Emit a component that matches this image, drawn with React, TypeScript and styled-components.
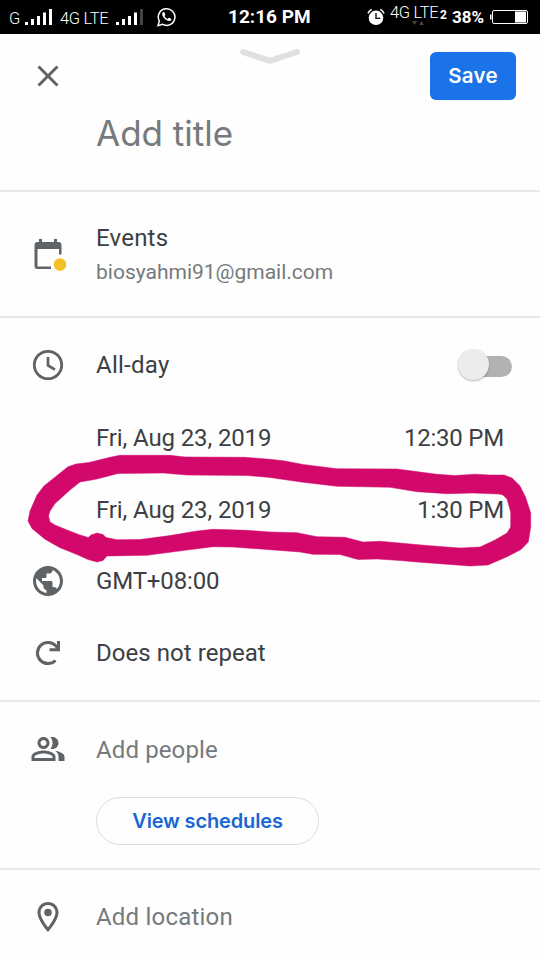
import React from 'react';
import styled, { createGlobalStyle } from 'styled-components';

const GlobalStyle = createGlobalStyle`
  * { box-sizing: border-box; }
  body { margin: 0; background: #fefefe; }
  button { font: inherit; padding: 0; border: 0; background: none; }
  svg { display: block; flex: none; }
`;

const Screen = styled.main`
  position: relative;
  width: 540px;
  height: 960px;
  overflow: hidden;
  background: #fefefe;
  color: #3c4043;
  font-family: Roboto, 'Liberation Sans', sans-serif;
`;

const StatusBar = styled.header`
  height: 34px;
  padding: 0 11px 0 9px;
  display: grid;
  grid-template-columns: 219px 1fr auto;
  align-items: center;
  background: #000;
  color: #fff;
`;

const StatusGroup = styled.div`
  display: flex;
  align-items: center;
  height: 34px;
`;

const Network = styled.span<{ $width: number; $top?: number }>`
  font-size: 16.5px;
  line-height: 20px;
  width: ${(p) => p.$width}px;
  margin-top: ${(p) => p.$top ?? 0}px;
  white-space: nowrap;
  letter-spacing: -0.3px;
  font-weight: 300;
`;

const IconGap = styled.span<{ $width: number }>`
  width: ${(p) => p.$width}px;
`;

const Clock = styled.time`
  font-weight: 700;
  font-size: 19px;
  line-height: 34px;
  white-space: nowrap;
`;

const Battery = styled.span`
  width: 37px;
  font-weight: 700;
  font-size: 17px;
  line-height: 34px;
`;

const NetworkStack = styled.div`
  display: flex;
  flex-direction: column;
  align-items: flex-start;
  width: 62px;
  height: 34px;
  padding-top: 3px;
`;

const NetworkLine = styled.div`
  display: flex;
  align-items: flex-start;
  height: 18px;
`;

const SimIndex = styled.b`
  font-size: 12px;
  line-height: 24px;
`;

const TitleSection = styled.section`
  height: 158px;
  border-bottom: 2px solid #e8e8e8;
`;

const ActionRow = styled.div`
  height: 66px;
  display: grid;
  grid-template-columns: 96px 1fr 110px;
`;

const IconCell = styled.div`
  display: flex;
  align-items: center;
  justify-content: center;
`;

const CloseButton = styled.button`
  display: flex;
  align-items: center;
  justify-content: center;
  padding-top: 18px;
`;

const DragHandle = styled.div`
  padding: 14px 0 0 143px;
`;

const SaveButton = styled.button`
  width: 86px;
  height: 48px;
  margin-top: 18px;
  border-radius: 6px;
  background: #1a73e8;
  color: #fff;
  font-family: Inter, sans-serif;
  font-weight: 600;
  font-size: 20.5px;
  line-height: 48px;
  letter-spacing: 0.3px;
`;

const TitleField = styled.div`
  padding-left: 96px;
  height: 68px;
  line-height: 66px;
  color: #757a7d;
  font-family: Inter, sans-serif;
  font-size: 35px;
  letter-spacing: 0;
`;

const Section = styled.section<{ $height: number }>`
  height: ${(p) => p.$height}px;
  padding: 11px 0;
  border-bottom: 2px solid #e7e8ea;
`;

const CalendarSection = styled.section`
  height: 126px;
  display: grid;
  grid-template-columns: 96px 1fr;
  border-bottom: 2px solid #e5e7ea;
`;

const Account = styled.div`
  padding-top: 29px;
`;

const AccountName = styled.div`
  font-size: 24px;
  line-height: 34px;
  letter-spacing: 0.2px;
`;

const Email = styled.div`
  font-size: 21px;
  line-height: 34px;
  color: #757a7d;
`;

const Row = styled.div<{ $drop?: boolean }>`
  height: 72px;
  padding: ${(p) => (p.$drop ? 2 : 0)}px 36px 0 0;
  display: grid;
  grid-template-columns: 96px 1fr auto;
  align-items: center;
`;

const Label = styled.span<{ $muted?: boolean; $spacing?: number; $drop?: boolean }>`
  font-size: 24px;
  line-height: 36px;
  padding-top: ${(p) => (p.$drop ? 2 : 0)}px;
  letter-spacing: ${(p) => p.$spacing ?? 0}px;
  color: ${(p) => (p.$muted ? '#757a7d' : '#3c4043')};
  white-space: nowrap;
`;

const Switch = styled.button`
  width: 54px;
  height: 35px;
  margin-right: -8px;
  padding: 8px 0 0 12px;
  display: grid;
`;

const SwitchTrack = styled.span`
  width: 42px;
  height: 21px;
  border-radius: 11px;
  background: #b2b2b2;
`;

const SwitchThumb = styled.span`
  position: relative;
  display: block;
  top: -7px;
  left: -12px;
  width: 31px;
  height: 31px;
  border-radius: 50%;
  background: #ececec;
  box-shadow: 0 1px 2px rgba(0, 0, 0, 0.3);
`;

const ScheduleButton = styled.button`
  display: block;
  width: 223px;
  height: 48px;
  margin: 12px 0 0 96px;
  border: 1px solid #dadce0;
  border-radius: 24px;
  color: #1967d2;
  font-family: Inter, sans-serif;
  font-weight: 600;
  font-size: 20px;
  line-height: 46px;
  letter-spacing: -0.15px;
`;

const MarkerOverlay = styled.svg`
  position: absolute;
  left: 0;
  top: 0;
  pointer-events: none;
`;

const GRAY = '#5f6366';

const Icon = ({ d }: { d: string }) => (
  <svg width="36" height="36" viewBox="0 0 24 24" fill={GRAY}>
    <path d={d} />
  </svg>
);

const ICONS = {
  close: 'M19 6.41 17.59 5 12 10.59 6.41 5 5 6.41 10.59 12 5 17.59 6.41 19 12 13.41 17.59 19 19 17.59 13.41 12z',
  globe:
    'M12 2C6.48 2 2 6.48 2 12s4.48 10 10 10 10-4.48 10-10S17.52 2 12 2zm-1 17.93c-3.95-.49-7-3.85-7-7.93 0-.62.08-1.21.21-1.79L9 15v1c0 1.1.9 2 2 2v1.93zm6.9-2.54c-.26-.81-1-1.39-1.9-1.39h-1v-3c0-.55-.45-1-1-1H8v-2h2c.55 0 1-.45 1-1V7h2c1.1 0 2-.9 2-2v-.41c2.93 1.19 5 4.06 5 7.41 0 2.08-.8 3.97-2.1 5.39z',
  people:
    'M16.67 13.13C18.04 14.06 19 15.32 19 17v3h4v-3c0-2.18-3.57-3.47-6.33-3.87zM15 12c2.21 0 4-1.79 4-4s-1.79-4-4-4c-.47 0-.91.1-1.33.24C14.5 5.27 15 6.58 15 8s-.5 2.73-1.33 3.76c.42.14.86.24 1.33.24zM9 12c2.21 0 4-1.79 4-4s-1.79-4-4-4-4 1.79-4 4 1.79 4 4 4zm0-6c1.1 0 2 .9 2 2s-.9 2-2 2-2-.9-2-2 .9-2 2-2zM9 13c-2.67 0-8 1.34-8 4v3h16v-3c0-2.66-5.33-4-8-4zm6 5H3v-.99C3.2 16.29 6.3 15 9 15s5.8 1.29 6 2v1z',
  place:
    'M12 2C8.13 2 5 5.13 5 9c0 5.25 7 13 7 13s7-7.75 7-13c0-3.87-3.13-7-7-7zM7 9c0-2.76 2.24-5 5-5s5 2.24 5 5c0 2.88-2.88 7.19-5 9.88C9.92 16.21 7 11.85 7 9zm5-2.5a2.5 2.5 0 1 0 0 5 2.5 2.5 0 0 0 0-5z',
};

const SignalBars = ({ weakLast }: { weakLast?: boolean }) => (
  <svg width="28" height="18" viewBox="0 0 28 18" fill="#fff">
    <path d="M0 14h3v3H0zM6 11h3v6H6zM12 8h3v9h-3zM18 4.500h3V17h-3z" />
    <path d="M24 1h3v16h-3z" fill={weakLast ? '#444' : '#fff'} />
  </svg>
);

const WhatsAppIcon = () => (
  <svg width="19" height="20" viewBox="0 0 19 20">
    <path d="M1 18.600 2.300 14A8.300 8.300 0 1 1 5.400 17.200z" fill="none" stroke="#fff" strokeWidth="1.500" />
    <path
      d="M6.700 5c-.7 0-1.500.8-1.500 2 0 3 4.200 7 7 7 1.200 0 2.200-1 2.200-1.800 0-.5-2-1.500-2.500-1.500s-.9 1.200-1.400 1.200c-.7 0-3-2.100-3-2.800 0-.4.9-.8.9-1.300S7.500 5 6.700 5z"
      fill="#fff"
    />
  </svg>
);

const AlarmIcon = () => (
  <svg width="18" height="18" viewBox="0 0 18 18">
    <circle cx="9" cy="9.800" r="7.300" fill="#fff" />
    <path d="M.9 5.300A9 9 0 0 1 4.800 1.300M13.200 1.300A9 9 0 0 1 17.100 5.300" stroke="#fff" strokeWidth="1.500" fill="none" />
    <path d="M9 5v5.300h4.300" stroke="#000" strokeWidth="1.300" fill="none" />
  </svg>
);

const BatteryIcon = () => (
  <svg width="40" height="16" viewBox="0 0 40 16">
    <path d="M1 5.500h1.500v5H1z" fill="#fff" />
    <rect x="3.500" y="1.500" width="35" height="13" rx="1.500" fill="none" stroke="#fff" />
    <path d="M26 2.500h11v11H26z" fill="#fff" />
  </svg>
);

const MARKER_PATH = `
M28 521 L30 511 37 495 44 486 68 466.700 76 464 89 462.500 110 457.300 120 455.300 170 455.300 185 457
245 457.300 270 459.300 285 461 303 464.500 337 468.700 397 469 437 474.300 455 475.500 475 474.200 490 475
504 475 512 478 520 486 525.500 497 530.700 513 530.700 527 528.300 542 521 549.500 507 556.700 488 565
470 566 453 564.700 420 562.300 400 560.500 377 559 358 559.500 340 554.500 313 554.300 300 552 270 549.700
233 547 213 546.700 185 550.300 147 555.300 113 555.900 107 556 103 560.500 97 562 88 559.500 77 554.500
60 547.700 45 539.300 32 528.500Z
M48.500 516 L50 522 55 525 67 530 80 535 88.300 537.500 91 535 97 533 103 534.500 106 537.500 117 539.700
140 539.500 170 535.600 197 531 213 529.300 247 530.300 270 532 297 532.700 317 536.700 345 537.300 363 542
380 541.300 427 545.500 460 548 480 547 495 540 507 533 510.700 527 510.700 512 507 499 503 495 499 494
473 493 447 493.700 417 491.700 390 487.300 337 486.300 303 482.300 270 477.500 247 475.500 187 475 163 473
118 473.500 97 479 80 482 70 490 55 503.500 50 511Z`;

export default function App() {
  return (
    <Screen>
      <GlobalStyle />
      <StatusBar>
        <StatusGroup>
          <Network $width={16} $top={4}>G</Network>
          <SignalBars />
          <IconGap $width={7} />
          <Network $width={56} $top={4}>4G LTE</Network>
          <SignalBars weakLast />
          <IconGap $width={13} />
          <WhatsAppIcon />
        </StatusGroup>
        <Clock>12:16 PM</Clock>
        <StatusGroup>
          <AlarmIcon />
          <IconGap $width={5} />
          <NetworkStack>
            <NetworkLine>
              <Network $width={50}>4G LTE</Network>
              <SimIndex>2</SimIndex>
            </NetworkLine>
            <svg width="40" height="5" viewBox="0 0 40 5" fill="#444">
              <path d="M22 0h5l-2.500 4zM29 4h5l-2.500-4z" />
            </svg>
          </NetworkStack>
          <Battery>38%</Battery>
          <BatteryIcon />
        </StatusGroup>
      </StatusBar>

      <TitleSection>
        <ActionRow>
          <CloseButton aria-label="Close">
            <Icon d={ICONS.close} />
          </CloseButton>
          <DragHandle>
            <svg width="62" height="18" viewBox="0 0 62 18">
              <path d="M4 4 31 12.800 58 4" fill="none" stroke="#e0e0e0" strokeWidth="6" strokeLinecap="round" />
            </svg>
          </DragHandle>
          <SaveButton>Save</SaveButton>
        </ActionRow>
        <TitleField>Add title</TitleField>
      </TitleSection>

      <CalendarSection>
        <IconCell>
          <svg width="36" height="36" viewBox="0 0 36 36">
            <path
              d="M9 3h3v3h12V3h3v3h1.500A3 3 0 0 1 31.500 9v9.500h-2.500V13H7.500v17.500H21V33H7.500a3 3 0 0 1-3-3V9a3 3 0 0 1 3-3H9z"
              fill={GRAY}
            />
            <circle cx="30" cy="28.500" r="6.300" fill="#f6bf26" />
          </svg>
        </IconCell>
        <Account>
          <AccountName>Events</AccountName>
          <Email>biosyahmi91@gmail.com</Email>
        </Account>
      </CalendarSection>

      <Section $height={384}>
        <Row>
          <IconCell>
            <svg width="36" height="36" viewBox="0 0 36 36" fill="none" stroke={GRAY}>
              <circle cx="18" cy="18" r="13.700" strokeWidth="2.800" />
              <path d="M18 10v8.500l7 4.200" strokeWidth="2.700" />
            </svg>
          </IconCell>
          <Label $spacing={0.25}>All-day</Label>
          <Switch role="switch" aria-checked="false" aria-label="All-day">
            <SwitchTrack>
              <SwitchThumb />
            </SwitchTrack>
          </Switch>
        </Row>
        <Row $drop>
          <span />
          <Label $spacing={-0.12}>Fri, Aug 23, 2019</Label>
          <Label $spacing={-0.22}>12:30 PM</Label>
        </Row>
        <Row $drop>
          <span />
          <Label $spacing={-0.12}>Fri, Aug 23, 2019</Label>
          <Label $spacing={-0.22}>1:30 PM</Label>
        </Row>
        <Row>
          <IconCell>
            <Icon d={ICONS.globe} />
          </IconCell>
          <Label $spacing={-0.15}>GMT+08:00</Label>
        </Row>
        <Row>
          <IconCell>
            <svg width="36" height="36" viewBox="0 0 36 36" fill="none" stroke={GRAY}>
              <path d="M25.500 25.500A10.600 10.600 0 1 1 25.800 10.800L28 13.500" strokeWidth="3" />
              <path d="M28.500 6v8.700H19.500" strokeWidth="3" />
            </svg>
          </IconCell>
          <Label $spacing={0.05}>Does not repeat</Label>
        </Row>
      </Section>

      <Section $height={168}>
        <Row>
          <IconCell>
            <Icon d={ICONS.people} />
          </IconCell>
          <Label $muted $drop $spacing={0.12}>Add people</Label>
        </Row>
        <ScheduleButton>View schedules</ScheduleButton>
      </Section>

      <Section $height={96}>
        <Row>
          <IconCell>
            <Icon d={ICONS.place} />
          </IconCell>
          <Label $muted $spacing={0.2}>Add location</Label>
        </Row>
      </Section>

      <MarkerOverlay width="540" height="960" viewBox="0 0 540 960">
        <path d={MARKER_PATH} fill="#d2086a" fillRule="evenodd" stroke="#d2086a" strokeWidth="0.500" strokeLinejoin="round" />
      </MarkerOverlay>
    </Screen>
  );
}
